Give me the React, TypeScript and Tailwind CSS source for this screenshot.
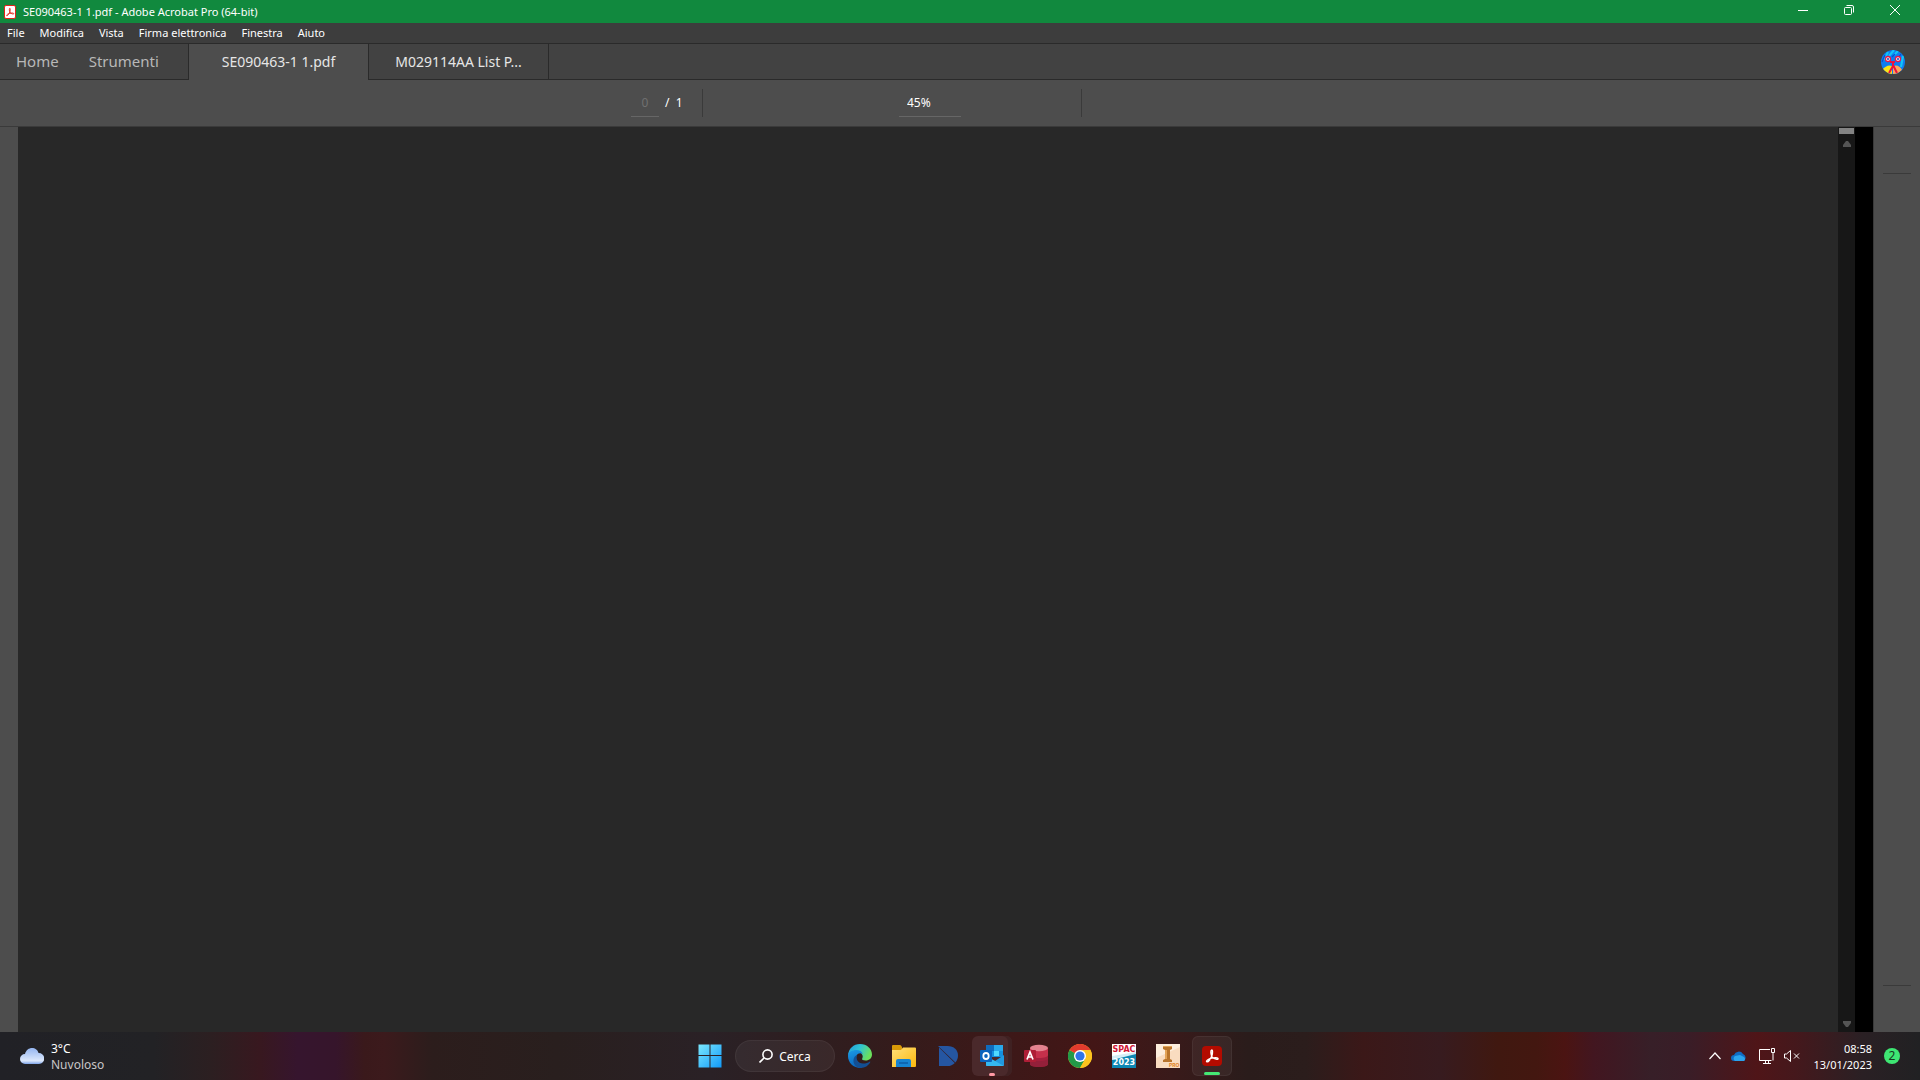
import type { ReactNode } from "react";

const menus = ["File", "Modifica", "Vista", "Firma elettronica", "Finestra", "Aiuto"];

const AcrobatMark = ({ className }: { className: string }) => (
  <svg viewBox="0 0 20 20" className={className} fill="none" stroke="currentColor" strokeWidth="1.8">
    <path d="M10 11.2C8.6 7.6 8 3 9.4 2.6c1.6-.4 1.5 3.7.4 7.200C8.600 13 5.500 18 3.600 17.300 1.900 16.500 5.500 13.600 9.500 12.700c3.800-1 8-1 8.100.5.1 1.800-4.300.8-7.600-2z" />
  </svg>
);

const Avatar = () => (
  <svg viewBox="0 0 24 24" className="size-6">
    <defs>
      <clipPath id="avatar">
        <circle cx="12" cy="12" r="12" />
      </clipPath>
    </defs>
    <g clipPath="url(#avatar)">
      <rect width="24" height="24" fill="#0f7df0" />
      <path d="M3 10 7 2M8 6l5-6M13 5l4-4M20 17l2-11" stroke="#12c4f8" strokeWidth="2.200" />
      <path d="M1 12 4 5M11 7l3-3M17 8l3-4" stroke="#0a4fd0" strokeWidth="1.200" />
      <path d="M1 20q5-6 10-4v8H2z" fill="#fbe316" />
      <path d="M12 16q6-2 9 4l-5 4h-4z" fill="#fda55a" />
      <path d="M12 12v4L8 23M12 15l4 8M9 12h5" stroke="#ea1240" strokeWidth="2" fill="none" />
      <circle cx="7" cy="9" r="2.500" fill="#fff" stroke="#e4184c" strokeWidth="1.300" />
      <circle cx="17" cy="9" r="2.500" fill="#fff" stroke="#e4184c" strokeWidth="1.300" />
      <circle cx="7" cy="9" r="1" fill="#1746b8" />
      <circle cx="17" cy="9" r="1" fill="#1746b8" />
    </g>
  </svg>
);

const WindowsIcon = () => (
  <svg viewBox="0 0 24 24" className="size-6">
    <defs>
      <linearGradient id="win" gradientUnits="userSpaceOnUse" x1="0" y1="0" x2="24" y2="24">
        <stop stopColor="#7deaff" />
        <stop offset="1" stopColor="#0f98f8" />
      </linearGradient>
    </defs>
    <path d="M.5 .5h11V11H.5zM12.500 .5h11V11h-11zM.5 12h11v11.500H.5zM12.500 12h11v11.500h-11z" fill="url(#win)" />
  </svg>
);

const EdgeIcon = () => (
  <svg viewBox="0 0 24 24" className="size-6">
    <defs>
      <linearGradient id="edgeTop" x1="0" y1="0" x2="1" y2=".4">
        <stop stopColor="#2199dc" />
        <stop offset=".5" stopColor="#2fc3d3" />
        <stop offset="1" stopColor="#6be05c" />
      </linearGradient>
      <linearGradient id="edgeSide" x1="0" y1="0" x2=".3" y2="1">
        <stop stopColor="#1b9be6" />
        <stop offset="1" stopColor="#0a65bd" />
      </linearGradient>
    </defs>
    <path d="M0 11.500C.5 4.500 5.500 0 12 0c7 0 12 5 12 10.500 0 3.800-2.800 6-6.300 6-2.700 0-4.300-1-3.400-2.300 1.400-2.400-.6-6.200-5-6.200C4.500 8 1 9.500 0 11.500z" fill="url(#edgeTop)" />
    <path d="M0 12c0-4 4-6 8.500-6 3 0 5.500 1.500 6.300 4-2-1.500-5-1-6.200 1.500-1.800 4 2 9.500 7.400 9.500l-3 3C5 24 0 18.500 0 12z" fill="url(#edgeSide)" />
    <path d="M9.200 10.800c-2.200 4 .8 8.700 5.800 8.700 3 0 5-.9 6.500-1.800.5-.3 1 .1.700.6C20.500 21.800 16.700 24 13 24c-5.500-.4-8-4.500-7.500-8 .3-2.300 1.500-4.200 3.700-5.200z" fill="#134f93" />
  </svg>
);

const FolderIcon = () => (
  <svg viewBox="0 0 24 24" className="size-6">
    <defs>
      <linearGradient id="folder" x1="0" y1="0" x2="1" y2="1">
        <stop stopColor="#ffe07b" />
        <stop offset="1" stopColor="#fcb80c" />
      </linearGradient>
    </defs>
    <path d="M0 2q0-1 1-1h7q1 0 2 2v4H0z" fill="#d99a08" />
    <path d="M0 6h9l2-2.500h12q1 0 1 1V22q0 1-1 1H0z" fill="url(#folder)" />
    <path d="M4 23v-6q0-2 2-2h11q2 0 2 2v6z" fill="#1683d2" />
    <path d="M7 19h9" stroke="#0c5ca7" strokeWidth="1.500" />
  </svg>
);

const DIcon = () => (
  <svg viewBox="0 0 24 24" className="size-6" fill="#2556a2">
    <path d="M2 2h9.500C18 2 22 6 22 11.500c0 2.800-1 5.200-2.600 6.900z" />
    <path d="M3 3.500 18.800 18.900C17 21 14.300 22 11.500 22H3z" />
  </svg>
);

const OutlookIcon = () => (
  <svg viewBox="0 0 24 24" className="size-6">
    <path d="M6 2q0-1 1-1h15q1 0 1 1v11H6z" fill="#1490df" />
    <path d="M6 1h8v6H6z" fill="#0f6cbd" />
    <path d="M14 1h9v6h-9z" fill="#28a8ea" />
    <path d="M14 7h5v5h-5z" fill="#50d9ff" />
    <path d="M24 11v10q0 1-1 1H7q-1 0-1-1v-8l9 4z" fill="#2199e0" />
    <path d="m6 12 18 10H7q-1 0-1-1z" fill="#35b8f1" />
    <rect y="6" width="12" height="12" rx="1" fill="#0a63bd" />
    <ellipse cx="6" cy="12" rx="2.700" ry="3" fill="none" stroke="#fff" strokeWidth="1.800" />
  </svg>
);

const AccessIcon = () => (
  <svg viewBox="0 0 24 24" className="size-6">
    <path d="M6 4v16c0 2 4 3 9 3s9-1 9-3V4z" fill="#a4203d" />
    <path d="M6 4v7c0 2 4 3 9 3s9-1 9-3V4z" fill="#c5304b" />
    <path d="M6 15c4 3 14 3 18 0v5c0 2-4 3-9 3s-9-1-9-3z" fill="#94203a" />
    <ellipse cx="15" cy="4" rx="9" ry="3.200" fill="#e4838f" />
    <rect y="6" width="12" height="12" rx="1" fill="#ae1e36" />
    <path d="m3 15.500 3-7.500 3 7.500M4 13h4" fill="none" stroke="#fff" strokeWidth="1.700" />
  </svg>
);

const ChromeIcon = () => (
  <svg viewBox="0 0 24 24" className="size-6">
    <circle cx="12" cy="12" r="12" fill="#fcc31e" />
    <path d="M12 12 1.600 6A12 12 0 0 0 12 24l5.200-9z" fill="#229a48" />
    <path d="M12 12 1.600 6a12 12 0 0 1 20.800 0z" fill="#e33b2e" />
    <path d="M12 6h10.400A12 12 0 0 1 12 24l5.200-9z" fill="#fcc31e" />
    <circle cx="12" cy="12" r="6" fill="#fff" />
    <circle cx="12" cy="12" r="4.600" fill="#2f74e8" />
  </svg>
);

const SpacIcon = () => (
  <svg viewBox="0 0 24 24" className="size-6" fontFamily="DejaVu Sans, sans-serif" fontWeight="700">
    <rect width="24" height="24" fill="#fff" />
    <path d="M0 15 24 9v15H0z" fill="#0d87b4" />
    <path d="M0 12 24 8v2L0 16z" fill="#d5edf5" />
    <text x="12" y="8" textAnchor="middle" fontSize="8" fill="#cf1635">SPAC</text>
    <text x="12" y="21" textAnchor="middle" fontSize="8" fill="#fff">2023</text>
  </svg>
);

const InventorIcon = () => (
  <svg viewBox="0 0 24 24" className="size-6">
    <rect width="24" height="24" fill="#fdeedd" />
    <path d="M0 14 24 3v21H0z" fill="#f9dcc0" />
    <path d="M7 2h9v3l-2 1v9l2 1v2H7v-2l2-1V6L7 5z" fill="#b9752c" />
    <path d="M9 6h2v9H9zM7 2h9v1H7z" fill="#e3a458" />
    <text x="13" y="23" fontSize="5" fontWeight="700" fontFamily="Inter, sans-serif" fill="#e18325">PRO</text>
  </svg>
);

const AcrobatIcon = () => (
  <span className="flex size-5 items-center justify-center rounded-sm bg-[#b30b00] text-white">
    <AcrobatMark className="size-4" />
  </span>
);

type TaskApp = { name: string; icon: ReactNode; className?: string; marker?: string };

const apps: TaskApp[] = [
  { name: "Edge", icon: <EdgeIcon /> },
  { name: "Esplora file", icon: <FolderIcon /> },
  { name: "D", icon: <DIcon /> },
  {
    name: "Outlook",
    icon: <OutlookIcon />,
    className: "bg-[#4a292b] shadow-[inset_-4px_0_0_#3f2122]",
    marker: "w-1.5 bg-[#ff99a4]",
  },
  { name: "Access", icon: <AccessIcon /> },
  { name: "Chrome", icon: <ChromeIcon /> },
  { name: "SPAC 2023", icon: <SpacIcon /> },
  { name: "Inventor", icon: <InventorIcon /> },
  {
    name: "Acrobat",
    icon: <AcrobatIcon />,
    className: "border border-white/5 bg-white/5",
    marker: "w-4 bg-[#45e874]",
  },
];

const TitleBar = () => (
  <header className="flex h-[23px] items-center justify-between bg-[#11893e] text-white">
    <div className="flex items-center gap-[7px] pl-1">
      <span className="flex h-3.5 w-3 items-center justify-center rounded-xs border border-[#e32219] bg-white text-[#e32219]">
        <AcrobatMark className="size-2.5" />
      </span>
      <h1 className="pt-0.5 text-[11px]">SE090463-1 1.pdf - Adobe Acrobat Pro (64-bit)</h1>
    </div>
    <div className="flex self-start pr-0.5">
      <button aria-label="Riduci a icona" className="flex h-5 w-[46px] items-center justify-center">
        <svg viewBox="0 0 10 10" className="size-2.5" stroke="currentColor">
          <path d="M0 5.500h10" />
        </svg>
      </button>
      <button aria-label="Ripristina" className="flex h-5 w-[46px] items-center justify-center">
        <svg viewBox="0 0 10 10" className="size-2.5" fill="none" stroke="currentColor">
          <rect x=".5" y="2.500" width="7" height="7" rx="1" />
          <path d="M2.500 .5H8q1.500 0 1.500 1.500v5.500" />
        </svg>
      </button>
      <button aria-label="Chiudi" className="flex h-5 w-[46px] items-center justify-center">
        <svg viewBox="0 0 10 10" className="size-2.5" stroke="currentColor">
          <path d="m0 0 10 10M10 0 0 10" />
        </svg>
      </button>
    </div>
  </header>
);

const TabBar = () => (
  <div className="flex h-9 bg-[#424242]">
    <div className="flex w-[189px] gap-[30px] border-r border-b border-[#2a2a2a] pl-4 text-[15px] text-[#b8b8b8]">
      <button>Home</button>
      <button>Strumenti</button>
    </div>
    <button className="w-[179px] bg-[#4d4d4d] text-sm text-[#e6e6e6]">SE090463-1 1.pdf</button>
    <button className="w-[181px] border-x border-b border-[#2a2a2a] text-sm text-[#e6e6e6]">
      M029114AA List P...
    </button>
    <div className="flex flex-1 items-center justify-end border-b border-[#2a2a2a] pr-[15px]">
      <button aria-label="Profilo">
        <Avatar />
      </button>
    </div>
  </div>
);

const Toolbar = () => (
  <div className="flex h-[47px] items-center justify-center border-b border-[#3a3a3a] bg-[#4d4d4d] pr-[207px] text-xs text-white">
    <div className="flex h-7 w-[72px] items-center border-r border-[#3a3a3a]">
      <input
        aria-label="Pagina"
        defaultValue="0"
        className="h-7 w-7 border-b border-[#666] text-center text-[#707070] outline-none"
      />
      <span className="pl-1.5 whitespace-pre">/  1</span>
    </div>
    <div className="flex h-7 w-[379px] items-center border-r border-[#3a3a3a] pl-[196px]">
      <input
        aria-label="Zoom"
        defaultValue="45%"
        className="h-7 w-[62px] border-b border-[#666] pl-2 outline-none"
      />
    </div>
  </div>
);

const Viewer = () => (
  <main className="flex flex-1">
    <aside className="w-[18px] bg-[#4d4d4d]" />
    <section className="flex-1 bg-[#282828]" />
    <div className="flex w-[17px] flex-col items-center bg-[#171717]">
      <div className="mt-px h-1.5 w-[15px] bg-[#838383]" />
      <button aria-label="Su" className="mt-[7px]">
        <svg viewBox="0 0 8 6" className="h-1.5 w-2 fill-[#555]">
          <path d="M3 0h2l3 4v2H0V4z" />
        </svg>
      </button>
      <button aria-label="Giù" className="mt-auto mb-[5px]">
        <svg viewBox="0 0 8 6" className="h-1.5 w-2 fill-[#555]">
          <path d="M0 0h8v2L5 6H3L0 2z" />
        </svg>
      </button>
    </div>
    <div className="w-[18px] bg-black" />
    <aside className="flex w-[47px] flex-col justify-between border-l border-[#3a3a3a] bg-[#4d4d4d] px-[9px] pt-[46px] pb-[46px]">
      <hr className="border-[#3a3a3a]" />
      <hr className="border-[#3a3a3a]" />
    </aside>
  </main>
);

const Taskbar = () => (
  <footer className="grid h-12 grid-cols-[1fr_auto_1fr] items-center bg-[linear-gradient(90deg,#212126_0%,#222225_8%,#2c1f21_11%,#38181f_13.500%,#36152e_15.5%,#36152b_17.500%,#3a191b_19%,#3c1a1c_20%,#2c1d1c_22.5%,#291f1e_29%,#2a2126_37%,#2e1e20_42%,#351b1b_47%,#431616_57%,#391a1a_61%,#2a1c1b_65%,#2b1d1c_68%,#3b1818_71%,#371b1f_75%,#401810_78%,#431710_80%,#4b1412_81.5%,#421620_83%,#371f28_86%,#3a1d27_88%,#4f1518_91.500%,#45181c_93.500%,#2a2024_97%,#212123_100%)] text-xs text-white">
    <button className="flex items-center gap-[7px] pl-5 text-left">
      <svg viewBox="0 0 24 16" className="h-4 w-6">
        <defs>
          <linearGradient id="cloud" x1="0" y1="0" x2="0" y2="1">
            <stop stopColor="#94b5f0" />
            <stop offset=".8" stopColor="#dce8fc" />
            <stop offset="1" stopColor="#7da3e8" />
          </linearGradient>
        </defs>
        <path d="M5 16a5 5 0 0 1 0-10C6 2 9 0 12 0s6 2 6.500 5A5.500 5.500 0 0 1 19 16z" fill="url(#cloud)" />
      </svg>
      <span className="pt-0.5 leading-4">
        3°C
        <span className="block text-[#c8c5c7]">Nuvoloso</span>
      </span>
    </button>

    <nav className="flex items-center gap-1 pl-0.5">
      <button aria-label="Start" className="flex size-10 items-center justify-center">
        <WindowsIcon />
      </button>
      <button className="mx-px flex h-8 w-[100px] items-center justify-center gap-1.5 rounded-full border border-white/5 bg-white/5">
        <svg viewBox="0 0 14 14" className="size-3.5" fill="none" stroke="currentColor" strokeWidth="1.600">
          <circle cx="8.500" cy="5.500" r="4.600" />
          <path d="m5 9-4.500 4.500" />
        </svg>
        <span className="pt-0.5">Cerca</span>
      </button>
      {apps.map((app) => (
        <button
          key={app.name}
          aria-label={app.name}
          className={`relative flex size-10 items-center justify-center rounded-md ${app.className ?? ""}`}
        >
          {app.icon}
          {app.marker && <span className={`absolute bottom-0 h-[3px] rounded-full ${app.marker}`} />}
        </button>
      ))}
    </nav>

    <div className="flex items-center justify-end pr-5">
      <button aria-label="Icone nascoste" className="mr-2.5">
        <svg viewBox="0 0 12 8" className="h-2 w-3" fill="none" stroke="currentColor" strokeWidth="1.200">
          <path d="m.5 7 5.500-6 5.500 6" />
        </svg>
      </button>
      <svg viewBox="0 0 16 10" className="mr-3 h-2.5 w-4">
        <path d="M3 10a3 3 0 0 1 0-6 5 5 0 0 1 9-1 4 4 0 0 1 1 7z" fill="#0f6cc4" />
        <path d="M4 10a3 3 0 0 1 0-5l5-1 4 2a2.500 2.500 0 0 1 0 4z" fill="#2ba3ec" />
      </svg>
      <svg viewBox="0 0 17 16" className="mr-2 h-4 w-[17px]" fill="none" stroke="currentColor">
        <path d="M11 1.500H.5v11h12M4 15.500h8M6.500 13v2M9.500 13v2M12.500 .5h3v4h-3zM14 5v7.500" />
      </svg>
      <svg viewBox="0 0 16 12" className="mr-[13px] h-3 w-4" fill="none" stroke="currentColor">
        <path d="M.5 4v4h2l4 3.500V.5L2.500 4zM10 3.500l5 5M15 3.500l-5 5" />
      </svg>
      <time className="pt-0.5 text-right text-[11px] leading-4">
        08:58
        <br />
        13/01/2023
      </time>
      <span className="ml-3 flex size-4 items-center justify-center rounded-full bg-[#3ee673] text-[#17381f]">2</span>
    </div>
  </footer>
);

export default function App() {
  return (
    <div className="flex min-h-screen flex-col bg-[#4d4d4d] font-['Noto_Sans',sans-serif]">
      <TitleBar />
      <nav className="flex h-[21px] items-center gap-[15px] border-b border-[#2a2a2a] bg-[#3d3d3d] pl-[7px] text-[11px] text-white">
        {menus.map((menu) => (
          <button key={menu}>{menu}</button>
        ))}
      </nav>
      <TabBar />
      <Toolbar />
      <Viewer />
      <Taskbar />
    </div>
  );
}
